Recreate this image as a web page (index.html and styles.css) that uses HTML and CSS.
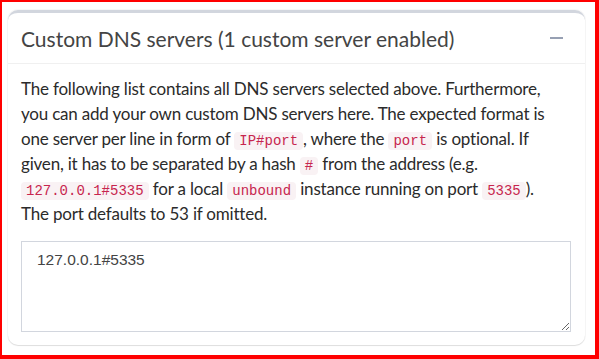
FILE: index.html
```html
<!DOCTYPE html>
<html lang="en">
<head>
    <meta charset="UTF-8">
    <meta name="viewport" content="width=device-width, initial-scale=1.0">
    <title>Custom DNS servers</title>
    <link rel="stylesheet" href="styles.css">
</head>
<body>

<div class="frame">
    <!-- Custom DNS box -->
    <div class="box">
        <div class="box-header">
            <h3 class="box-title">Custom DNS servers (1 custom server enabled)</h3>
            <button class="box-tool" type="button" aria-label="Collapse">
                <svg width="13" height="2" viewBox="0 0 13 2"><rect width="13" height="2" fill="#97a0b3"/></svg>
            </button>
        </div>
        <div class="box-body">
            <p>The following list contains all DNS servers selected above. Furthermore, you can add your own custom DNS servers here. The expected format is one server per line in form of <code>IP#port</code>, where the <code>port</code> is optional. If given, it has to be separated by a hash <code>#</code> from the address (e.g. <code>127.0.0.1#5335</code> for a local <code>unbound</code> instance running on port <code>5335</code>). The port defaults to 53 if omitted.</p>
            <textarea class="form-control" rows="3">127.0.0.1#5335</textarea>
        </div>
    </div>
</div>

</body>
</html>
```

FILE: styles.css
```css
html, body {
    margin: 0;
    padding: 0;
    background-color: #fff;
}
.frame {
    box-sizing: border-box;
    width: 599px;
    height: 359px;
    border-style: solid;
    border-color: #f00;
    border-width: 2px 4px 4px 2px;
    padding: 8px 10px 10px 6px;
}
.box {
    box-sizing: border-box;
    height: 335px;
    background-color: #fff;
    border-top: 3px solid #d2d6de;
    border-radius: 10px;
    box-shadow: 0 1px 1px rgba(0, 0, 0, 0.1), 0 0 0 1px rgba(0, 0, 0, 0.03);
    font-family: 'Lato', sans-serif;
    color: #2b2b2b;
}
.box-header {
    display: flex;
    align-items: center;
    justify-content: space-between;
    height: 50px;
    padding: 0 22px 0 13px;
    border-bottom: 1px solid #f0f0f0;
}
.box-title {
    margin: 0;
    font-size: 21px;
    font-weight: normal;
    color: #444;
}
.box-tool {
    background: none;
    border: none;
    padding: 0;
    display: flex;
    cursor: pointer;
}
.box-body {
    padding: 12px 14px 14px 13px;
}
.box-body p {
    max-width: 534px;
    margin: 0 0 15px;
    font-size: 17px;
    letter-spacing: -0.2px;
    line-height: 25px;
}
code {
    font-family: 'Liberation Mono', monospace;
    font-size: 14px;
    letter-spacing: 0;
    line-height: 16px;
    color: #c7254e;
    background-color: #f9f2f4;
    border-radius: 4px;
    padding: 1px 5px;
}
.form-control {
    display: block;
    box-sizing: border-box;
    width: 100%;
    height: 91px;
    margin: 0;
    padding: 9px 15px;
    border: 1px solid #d2d6de;
    border-radius: 0;
    font-family: 'Liberation Sans', sans-serif;
    font-size: 15.5px;
    color: #444;
    resize: vertical;
}
```
